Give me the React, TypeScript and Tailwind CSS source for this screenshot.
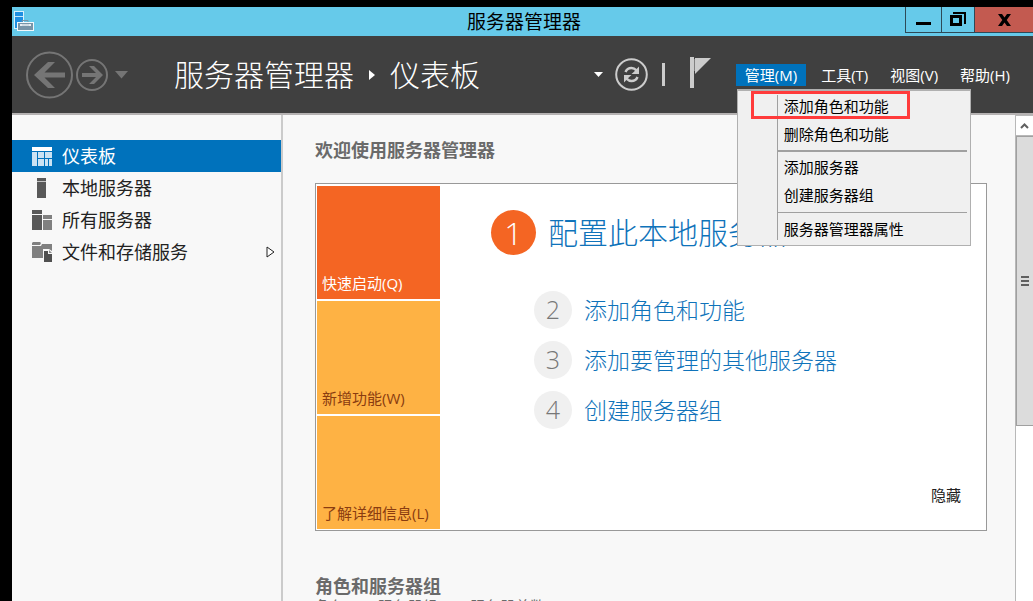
import { useState } from 'react';

const uiFont = "font-['Open_Sans','Noto_Sans_CJK_SC',sans-serif]";

function AppLogo() {
  return (
    <svg width="20" height="20" viewBox="0 0 20 20" aria-hidden="true">
      <rect x="0.5" y="0.5" width="9" height="17" fill="#1e8fe1" stroke="#d9f1fc" />
      <path d="M1 5.500h8" stroke="#bfe6fa" />
      <path d="M8 11V9.500h6V11" fill="none" stroke="#7895a8" />
      <rect x="3.500" y="11.500" width="16" height="8" fill="#7895a8" stroke="#f2f8fb" />
      <path d="M6 14h11" stroke="#cfdbe3" strokeWidth="2" />
      <path d="M7 13v2M16 13v2" stroke="#fff" />
    </svg>
  );
}

function DashboardIcon() {
  return (
    <svg width="20" height="19" viewBox="0 0 20 19" aria-hidden="true">
      <rect width="20" height="4" fill="#fff" />
      <path fill="#cbe3f3" d="M0 5h5v14H0zM6 5h6v6H6zM13 5h7v6h-7zM6 12h6v7H6zM13 12h3v7h-3zM17 12h3v7h-3z" />
    </svg>
  );
}

function ServerIcon() {
  return (
    <svg width="20" height="20" viewBox="0 0 20 20" aria-hidden="true">
      <path fill="#595959" d="M5 0h9v3H5zM5 4h9v16H5z" />
      <path fill="#c4c4c4" d="M5 3h9v1H5z" />
    </svg>
  );
}

function ServersIcon() {
  return (
    <svg width="20" height="20" viewBox="0 0 20 20" aria-hidden="true">
      <path fill="#595959" d="M0 0h10v4H0zM0 5h10v15H0z" />
      <path fill="#808080" d="M11 5h9v4h-9zM11 10h9v10h-9z" />
    </svg>
  );
}

function StorageIcon() {
  return (
    <svg width="20" height="20" viewBox="0 0 20 20" aria-hidden="true">
      <path fill="#808080" d="M0 1l1-1h7l1 1-1 2H0zM0 4h9l1-2h10v7l-3-2h-6v9H0z" />
      <path fill="#505050" d="M12 9h4v3h4v8h-8z" />
      <path fill="#8c8c8c" d="M17 8l3 3h-3z" />
    </svg>
  );
}

const navItems = [
  { label: '仪表板', icon: <DashboardIcon /> },
  { label: '本地服务器', icon: <ServerIcon /> },
  { label: '所有服务器', icon: <ServersIcon /> },
  { label: '文件和存储服务', icon: <StorageIcon />, expandable: true },
];

const steps = ['添加角色和功能', '添加要管理的其他服务器', '创建服务器组'];

function TitleBar() {
  return (
    <div className="relative flex h-[29px] shrink-0 items-start bg-[#66caea]">
      <span className="ml-0.5 mt-1">
        <AppLogo />
      </span>
      <h1 className="flex-1 pl-[21px] text-center text-[19px] leading-[30px] text-black">
        <span className="pl-[88px]">服务器管理器</span>
      </h1>
      <div className="flex h-[26px] border-b border-l border-[#2d4a58]">
        <button type="button" aria-label="最小化" className="flex w-9 items-center justify-center border-r border-[#2d4a58]">
          <svg width="15" height="14" viewBox="0 0 15 14">
            <path d="M0 9h15v3H0z" />
          </svg>
        </button>
        <button type="button" aria-label="还原" className="flex w-[33px] items-center justify-center border-r border-[#2d4a58]">
          <svg width="16" height="15" viewBox="0 0 16 15" fill="none" stroke="#000">
            <path d="M1.500 4.500h9v8h-9z" strokeWidth="3" />
            <path d="M3 1h12v11" strokeWidth="2" />
          </svg>
        </button>
        <button type="button" aria-label="关闭" className="flex w-[58px] items-center justify-center bg-[#c35a50]">
          <svg width="13" height="12" viewBox="0 0 13 12">
            <path d="M0 0h4l2.500 3.500L9 0h4L8.700 6l4.300 6H9L6.500 8.500 4 12H0l4.300-6z" />
          </svg>
        </button>
      </div>
    </div>
  );
}

function ManageMenu() {
  const item = 'block w-full pl-1.5 text-left text-[15px] leading-[22px] text-black';

  return (
    <div className="absolute left-px top-[25px] z-10 w-[234px] border border-t-2 border-[#b0b0b0] bg-[#f0f0f0] pb-[5px] pl-[39px] pt-1">
      <div role="menu" className="border-l border-[#a0a0a0]">
        <button type="button" role="menuitem" className={`${item} mb-1.5`}>添加角色和功能</button>
        <button type="button" role="menuitem" className={item}>删除角色和功能</button>
        <div className="mb-1 mr-[3px] mt-[5px] h-0.5 bg-[#a0a0a0]" />
        <button type="button" role="menuitem" className={`${item} mb-1.5`}>添加服务器</button>
        <button type="button" role="menuitem" className={item}>创建服务器组</button>
        <div className="mb-[5px] mr-[3px] mt-1.5 h-px bg-[#a0a0a0]" />
        <button type="button" role="menuitem" className={item}>服务器管理器属性</button>
      </div>
      <div className="pointer-events-none absolute left-[13px] top-0 h-7 w-[159px] border-3 border-[#ff3b3b]" />
    </div>
  );
}

function Header() {
  const [open, setOpen] = useState(true);

  return (
    <header className="flex h-[79px] shrink-0 items-center border-b-2 border-[#b5b2b2] bg-[#404040] pl-3.5 pr-3.5 text-white">
      <button type="button" aria-label="后退">
        <svg width="47" height="48" viewBox="0 0 47 48" fill="none" stroke="#757575">
          <circle cx="23.500" cy="24" r="22.500" strokeWidth="2" />
          <path fill="#757575" stroke="none" d="M8 24L22 11h7L18.500 21.500H39v5H18.500L29 37h-7z" />
        </svg>
      </button>
      <button type="button" aria-label="前进" className="ml-[3px]">
        <svg width="32" height="32" viewBox="0 0 32 32" fill="none" stroke="#757575">
          <circle cx="16" cy="16" r="15" strokeWidth="2" />
          <path fill="#757575" stroke="none" d="M27 16l-9 9h-5l7-7H6v-4h14l-7-7h5z" />
        </svg>
      </button>
      <button type="button" aria-label="历史记录" className="ml-[7px]">
        <svg width="13" height="8" viewBox="0 0 13 8">
          <path fill="#757575" d="M0 0h13L6.500 7.500z" />
        </svg>
      </button>
      <div className="ml-[46px] flex items-center whitespace-nowrap text-[30px] font-light leading-10">
        <span>服务器管理器</span>
        <svg className="mx-[15px]" width="6" height="10" viewBox="0 0 6 10">
          <path fill="#fff" d="M0 0l6 5-6 5z" />
        </svg>
        <span>仪表板</span>
      </div>
      <div className="ml-auto flex items-center">
        <button type="button" aria-label="展开">
          <svg width="9" height="5" viewBox="0 0 9 5">
            <path fill="#fff" d="M0 0h9L4.500 5z" />
          </svg>
        </button>
        <button type="button" aria-label="刷新" className="ml-3">
          <svg width="33" height="33" viewBox="0 0 33 33" fill="none" stroke="#ccc">
            <circle cx="16.500" cy="16.500" r="15.300" strokeWidth="2" />
            <path d="M10.500 14c1-2.500 3-4 6-4 2 0 3.500.8 5 2.300M22.500 19c-1 2.500-3 4-6 4-2 0-3.500-.8-5-2.300" strokeWidth="2.500" />
            <path fill="#ccc" stroke="none" d="M24 8.500V16h-7.500l2.500-2.300zM9 24.500V17h7.500L14 19.300z" />
          </svg>
        </button>
        <span className="ml-3.5 h-[23px] w-[3px] bg-[#ccc]" />
        <button type="button" aria-label="通知" className="mb-1 ml-[25px]">
          <svg width="21" height="31" viewBox="0 0 21 31">
            <path fill="#ccc" d="M0 0h4v31H0zM5 1h16L5 17z" />
            <path stroke="#808080" d="M4.500 2v12" />
          </svg>
        </button>
      </div>
      <nav className="ml-[25px] flex items-center whitespace-nowrap text-[15px] leading-[22px]">
        <div className="relative mr-1">
          <button type="button" aria-expanded={open} onClick={() => setOpen(!open)} className="block bg-[#0072bc] px-[9px]">
            管理(M)
          </button>
          {open && <ManageMenu />}
        </div>
        <button type="button" className="px-[11px]">工具(T)</button>
        <button type="button" className="px-[11px]">视图(V)</button>
        <button type="button" className="pl-[11px] pr-[9px]">帮助(H)</button>
      </nav>
    </header>
  );
}

function Sidebar() {
  const [active, setActive] = useState('仪表板');

  return (
    <aside className="w-[271px] shrink-0 border-r-2 border-[#cbcbcb] pt-[25px]">
      {navItems.map((item) => (
        <button
          key={item.label}
          type="button"
          onClick={() => setActive(item.label)}
          className={`flex h-8 w-full items-center gap-2.5 pl-5 pr-1.5 text-[18px] leading-8 ${
            active === item.label ? 'bg-[#0072bc] text-white' : 'text-[#222]'
          }`}
        >
          {item.icon}
          <span>{item.label}</span>
          {item.expandable && (
            <svg className="ml-auto" width="9" height="12" viewBox="0 0 9 12">
              <path fill="#fff" stroke="#222" d="M1 1l7 5-7 5z" />
            </svg>
          )}
        </button>
      ))}
    </aside>
  );
}

function WelcomeCard() {
  const tile = 'flex h-[113px] items-end pb-[5px] pl-[5px] text-left text-[15px] leading-[22px]';

  return (
    <section className="mt-5 flex border border-[#999] bg-white p-px pt-0.5">
      <div className="flex w-[123px] shrink-0 flex-col gap-0.5 whitespace-nowrap">
        <button type="button" className={`${tile} bg-[#f46523] text-white`}>快速启动(Q)</button>
        <button type="button" className={`${tile} bg-[#feb244] text-[#8a3c10]`}>新增功能(W)</button>
        <button type="button" className={`${tile} bg-[#feb244] text-[#8a3c10]`}>了解详细信息(L)</button>
      </div>
      <div className="flex flex-1 flex-col whitespace-nowrap pl-[51px] pt-6 text-[#0f73ba]">
        <div className="flex items-center gap-3">
          <span className="flex size-[45px] items-center justify-center rounded-full bg-[#f46523] text-[32px] font-light text-white">1</span>
          <a href="#configure" className="text-[30px] font-light leading-10">配置此本地服务器</a>
        </div>
        <ol className="mt-9 flex flex-col gap-3 pl-[43px]">
          {steps.map((step, i) => (
            <li key={step} className="flex items-center gap-3">
              <span className="flex size-[38px] items-center justify-center rounded-full bg-[#f0f0f0] text-[25px] font-light text-[#777]">{i + 2}</span>
              <a href="#step" className="text-[23px] font-light leading-8">{step}</a>
            </li>
          ))}
        </ol>
        <button type="button" className="mb-[23px] mr-6 mt-auto self-end text-[15px] leading-[22px] text-[#222]">隐藏</button>
      </div>
    </section>
  );
}

function ScrollBar() {
  return (
    <div className="flex w-[18px] shrink-0 flex-col border-l border-[#b8b8b8] bg-white">
      <button type="button" aria-label="向上滚动" className="flex h-[21px] shrink-0 items-center justify-center border-b border-t border-[#b8b8b8]">
        <svg width="9" height="6" viewBox="0 0 9 6" fill="none">
          <path d="M1 5l3.500-3.500L8 5" stroke="#606060" strokeWidth="2" />
        </svg>
      </button>
      <div className="flex h-[290px] flex-col items-center justify-center gap-0.5 border border-r-0 border-[#a0a0a0] bg-[#dcdcdc]">
        <span className="h-0.5 w-2 bg-[#606060]" />
        <span className="h-0.5 w-2 bg-[#606060]" />
        <span className="h-0.5 w-2 bg-[#606060]" />
      </div>
    </div>
  );
}

export default function App() {
  return (
    <div className={`flex h-screen flex-col overflow-hidden bg-black pl-3 pt-[7px] ${uiFont}`}>
      <TitleBar />
      <Header />
      <div className="flex min-h-0 flex-1 bg-[#f8f8f8]">
        <Sidebar />
        <main className="min-w-0 flex-1 overflow-hidden pl-8 pr-7 pt-[23px]">
          <h2 className="text-[18px] font-bold leading-[25px] text-[#6a6a6a]">欢迎使用服务器管理器</h2>
          <WelcomeCard />
          <h2 className="mt-[43px] text-[18px] font-bold leading-[25px] text-[#6a6a6a]">角色和服务器组</h2>
          <p className="-mt-[3px] text-[15px] leading-5 text-[#6a6a6a]">角色: 1 | 服务器组: 1 | 服务器总数: 1</p>
        </main>
        <ScrollBar />
      </div>
    </div>
  );
}
